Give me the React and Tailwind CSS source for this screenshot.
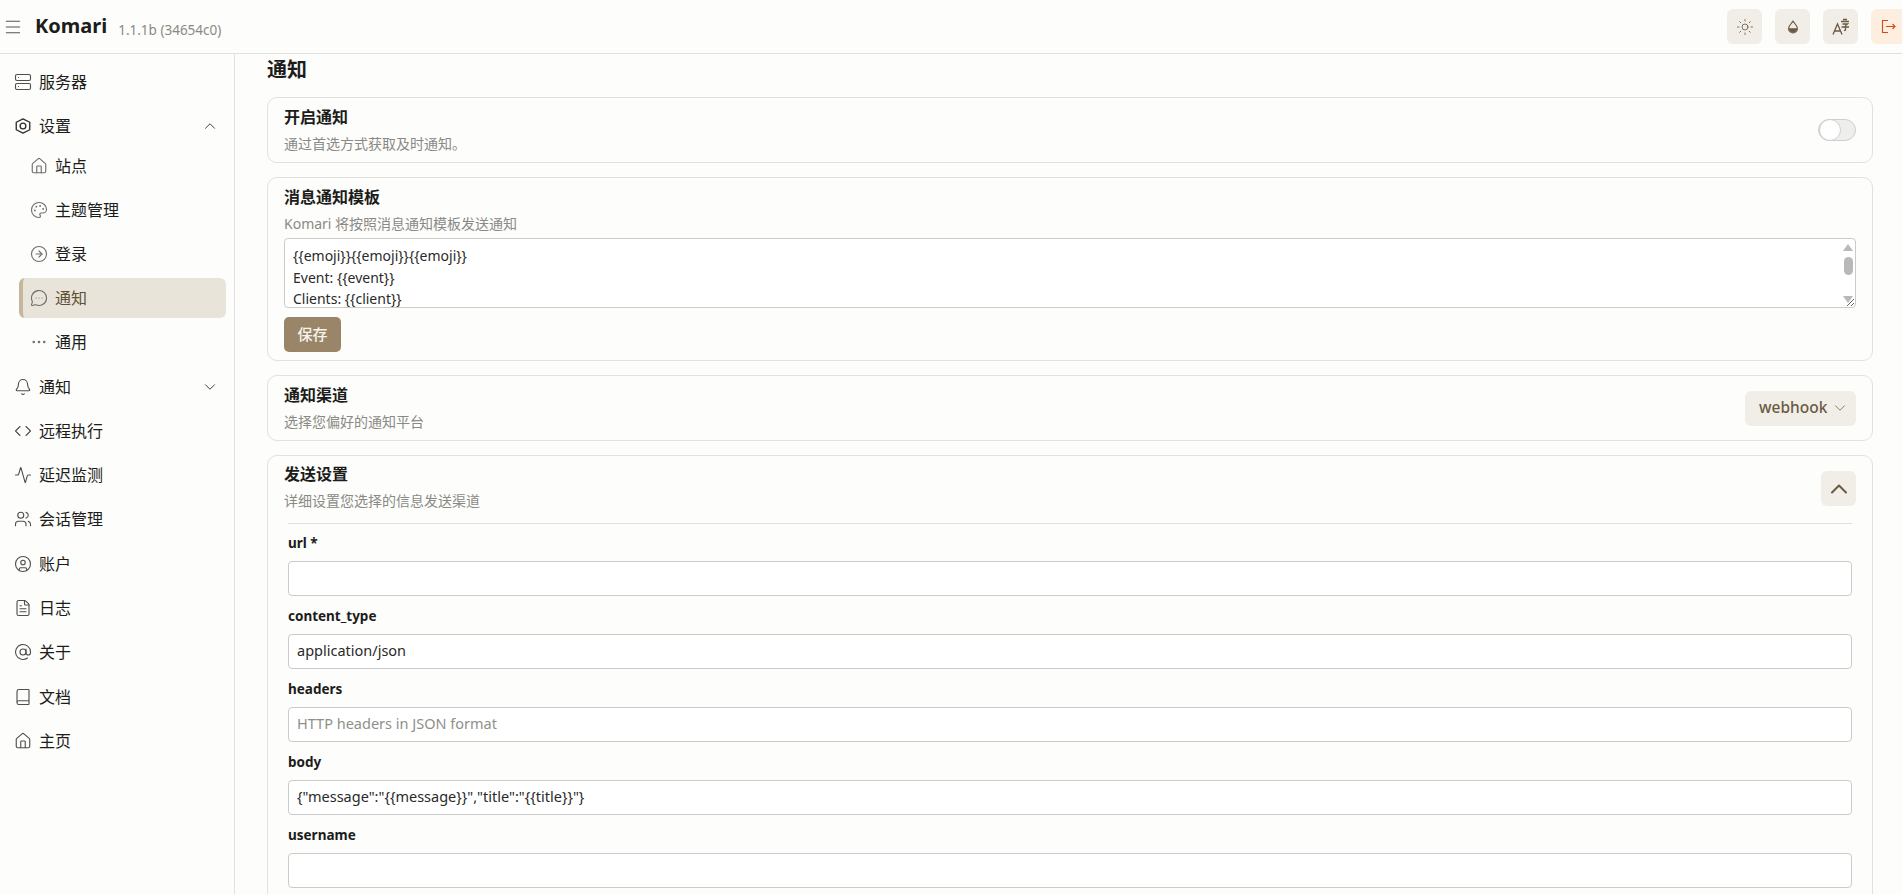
import React from "react";
import { Menu, Server, ChevronUp, ChevronDown, House, Palette, CircleArrowRight, MessageCircleMore, Ellipsis, Bell, Code, Activity, Users, CircleUser, FileText, AtSign, Book, Sun } from "lucide-react";

const FONT = "font-['Noto_Sans','Noto_Sans_CJK_SC',sans-serif]";

function Hex({ size = 18, className }) {
  return (
    <svg width={size} height={size} viewBox="0 0 24 24" fill="none" stroke="currentColor" strokeWidth="1.800" strokeLinecap="round" strokeLinejoin="round" className={`${className} !text-[#2f2f2d]`}>
      <path d="M12 2.500 21 7v10L12 21.500 3 17V7z" />
      <circle cx="12" cy="12" r="3.800" />
    </svg>
  );
}

function NavItem({ icon: Icon, label, sub, active, chevron }) {
  return (
    <div className={`flex items-center h-10 rounded-md text-[16px] text-[#1c1c1a] gap-[7px] ${sub ? "ml-[19px] w-[207px] pl-[11px]" : "ml-[14px] w-[212px]"} ${active ? "bg-[#e9e4da] border-l-[4px] border-[#c5b69d] !pl-[7px] text-[#5f5038]" : ""}`}>
      <Icon size={18} strokeWidth={1.5} className={`shrink-0 ${sub ? "text-[#6e6e6a]" : "text-[#4f4f4c]"}`} />
      <span className="flex-1">{label}</span>
      {chevron === "up" && <ChevronUp size={18} strokeWidth={1.25} className="text-[#333] mr-[7px]" />}
      {chevron === "down" && <ChevronDown size={18} strokeWidth={1.25} className="text-[#333] mr-[7px]" />}
    </div>
  );
}

function IconBtn({ children, danger }) {
  return (
    <div className={`flex items-center justify-center w-[35px] h-[35px] rounded-md shrink-0 ${danger ? "bg-[#feeee0] text-[#d9480f]" : "bg-[#f1eee8] text-[#6b5a43]"}`}>
      {children}
    </div>
  );
}

function Card({ children, className = "" }) {
  return <section className={`border border-[#e2e1de] rounded-[10px] px-4 ${className}`}>{children}</section>;
}

function CardHead({ title, desc }) {
  return (
    <div>
      <h3 className="text-[16px] leading-[22px] font-semibold text-[#1c1c1a]">{title}</h3>
      <p className="mt-[6px] text-[14px] leading-[20px] text-[#8a8a85]">{desc}</p>
    </div>
  );
}

function Field({ label, value, placeholder, first }) {
  return (
    <div className={first ? "mt-[9px]" : "mt-[10px]"}>
      <label className="block text-[13.500px] font-bold leading-[20px] text-[#1c1c1a]">{label}</label>
      <input
        readOnly
        value={value || ""}
        placeholder={placeholder}
        className="mt-[8px] block w-full h-[35px] rounded-[4px] border border-[#cbcbc8] bg-white px-2 pb-[3px] text-[14.500px] text-[#2a2a28] placeholder:text-[#8f8f8a] outline-none"
      />
    </div>
  );
}

export default function App() {
  return (
    <div className={`${FONT} h-screen overflow-hidden bg-[#fdfdfb] flex flex-col`}>
      <header className="h-[54px] shrink-0 border-b border-[#e2e1de] flex items-center pl-[3px]">
        <Menu size={20} strokeWidth={1.25} className="text-[#555]" />
        <span className="ml-[12px] mb-[1px] text-[20px] font-bold text-[#1c1c1a]">Komari</span>
        <span className="ml-[11px] mt-[8px] text-[13.500px] text-[#8a8a85]">1.1.1b (34654c0)</span>
        <div className="ml-auto flex items-center gap-[13px] -mr-[4px]">
          <IconBtn><Sun size={18} strokeWidth={1.1} /></IconBtn>
          <IconBtn>
            <svg width="14" height="14" viewBox="0 0 15 15" fill="none">
              <path d="M7.500 1.200 C6 3.600 2.700 6 2.700 9 A4.800 4.800 0 0 0 12.300 9 C12.300 6 9 3.600 7.500 1.200Z" stroke="currentColor" strokeWidth="1.100" />
              <path d="M3 8.800 H12 C12.200 11.500 10 13.500 7.500 13.500 C5 13.500 2.800 11.500 3 8.800Z" fill="currentColor" />
            </svg>
          </IconBtn>
          <IconBtn>
            <svg width="18" height="18" viewBox="0 0 18 18" fill="none" stroke="currentColor" strokeWidth="1.300">
              <path d="M1 16.500 5.500 6l4.500 10.500M2.500 13h6" />
              <path d="M9 3.500h8M11 1.500h4M10.500 6h5l-2 1.500M9.500 9h7.500M13.500 7.500V12l-1.500.8" />
            </svg>
          </IconBtn>
          <IconBtn danger>
            <svg width="15" height="15" viewBox="0 0 15 15" fill="none" stroke="currentColor" strokeWidth="1.100">
              <path d="M7 1.500H1.500v12H7M5 7.500h9M11.500 5l2.500 2.500-2.500 2.500" />
            </svg>
          </IconBtn>
        </div>
      </header>

      <div className="flex flex-1 min-h-0">
        <aside className="w-[235px] shrink-0 border-r border-[#e2e1de] pt-2 flex flex-col gap-[4.300px] text-[16px]">
          <NavItem icon={Server} label="服务器" />
          <div>
            <NavItem icon={Hex} label="设置" chevron="up" />
            <div className="flex flex-col gap-[4px]">
              <NavItem sub icon={House} label="站点" />
              <NavItem sub icon={Palette} label="主题管理" />
              <NavItem sub icon={CircleArrowRight} label="登录" />
              <NavItem sub active icon={MessageCircleMore} label="通知" />
              <NavItem sub icon={Ellipsis} label="通用" />
            </div>
          </div>
          <NavItem icon={Bell} label="通知" chevron="down" />
          <NavItem icon={Code} label="远程执行" />
          <NavItem icon={Activity} label="延迟监测" />
          <NavItem icon={Users} label="会话管理" />
          <NavItem icon={CircleUser} label="账户" />
          <NavItem icon={FileText} label="日志" />
          <NavItem icon={AtSign} label="关于" />
          <NavItem icon={Book} label="文档" />
          <NavItem icon={House} label="主页" />
        </aside>

        <main className="flex-1 min-w-0 pl-[32px] pr-[29px] overflow-hidden">
          <h2 className="mt-[2px] text-[20px] leading-[28px] font-bold text-[#1c1c1a]">通知</h2>
          <div className="mt-[13px] flex flex-col gap-[14px]">
            <Card className="h-[66px] flex items-center justify-between">
              <CardHead title="开启通知" desc="通过首选方式获取及时通知。" />
              <div className="w-[38px] h-[22px] rounded-full bg-[#eeeeec] border border-[#cfcfcc] relative">
                <div className="absolute left-0 -top-px w-[22px] h-[22px] rounded-full bg-white border border-[#cfcfcc]" />
              </div>
            </Card>

            <Card className="h-[184px] pt-[8px]">
              <CardHead title="消息通知模板" desc="Komari 将按照消息通知模板发送通知" />
              <div className="relative mt-[4px]">
                <textarea
                  readOnly
                  value={"{{emoji}}{{emoji}}{{emoji}}\nEvent: {{event}}\nClients: {{client}}\nMessage: {{message}}\nTime: {{time}}"}
                  className="block w-full h-[70px] resize overflow-hidden rounded-[4px] border border-[#cbcbc8] bg-white pl-2 pr-6 pt-[6px] text-[14px] leading-[21.500px] text-[#2a2a28] outline-none"
                />
                <div className="absolute right-[3px] top-[6px] h-[59px] w-[10px] flex flex-col items-center pointer-events-none">
                  <div className="w-0 h-0 border-x-[5px] border-x-transparent border-b-[7px] border-b-[#b9b9b9]" />
                  <div className="mt-[6px] w-[9px] h-[18px] rounded-full bg-[#b9b9b9]" />
                  <div className="mt-auto w-0 h-0 border-x-[5px] border-x-transparent border-t-[7px] border-t-[#b9b9b9]" />
                </div>
              </div>
              <button className="mt-[9px] h-[35px] w-[57px] rounded-[5px] bg-[#9a8568] text-[15px] font-medium text-[#f7f4ee]">保存</button>
            </Card>

            <Card className="h-[66px] flex items-center justify-between">
              <CardHead title="通知渠道" desc="选择您偏好的通知平台" />
              <div className="flex items-center h-[35px] w-[111px] rounded-md bg-[#f1eee8] pl-[14px] text-[#6b5a43]">
                <span className="text-[15.500px] font-medium">webhook</span>
                <ChevronDown size={18} strokeWidth={1} className="ml-[4px]" />
              </div>
            </Card>

            <Card className="h-[600px] pt-[7px]">
              <div className="flex items-start justify-between">
                <CardHead title="发送设置" desc="详细设置您选择的信息发送渠道" />
                <div className="mt-[8px]">
                  <IconBtn><ChevronUp size={28} strokeWidth={1.75} /></IconBtn>
                </div>
              </div>
              <div className="mx-[4px] mt-[12px]">
                <div className="h-px bg-[#e2e1de]" />
                <Field first label="url *" />
                <Field label="content_type" value="application/json" />
                <Field label="headers" placeholder="HTTP headers in JSON format" />
                <Field label="body" value={'{"message":"{{message}}","title":"{{title}}"}'} />
                <Field label="username" />
              </div>
            </Card>
          </div>
        </main>
      </div>
    </div>
  );
}
